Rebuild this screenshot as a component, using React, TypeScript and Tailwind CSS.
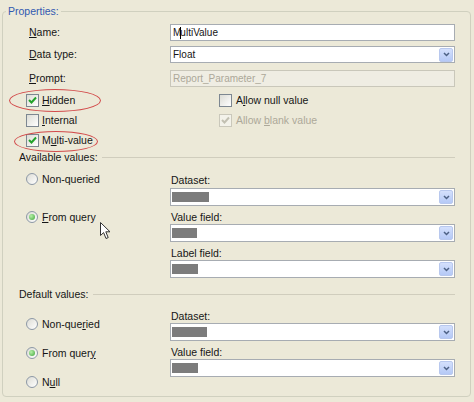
import type { ReactNode } from 'react'

function Check({ checked, disabled }: { checked?: boolean; disabled?: boolean }) {
  return (
    <span
      className={`inline-flex h-[13px] w-[13px] shrink-0 items-center justify-center border ${
        disabled ? 'border-[#cac8bb] bg-[#f3f2ea]' : 'border-[#7d8791] bg-gradient-to-br from-[#dcdcd5] to-white'
      }`}
    >
      {checked && (
        <svg width="9" height="8" viewBox="0 0 9 8">
          <path
            d="M1 4 L3.5 6.5 L8 1.5"
            fill="none"
            stroke={disabled ? '#c2c0b2' : '#22a22a'}
            strokeWidth="2"
          />
        </svg>
      )}
    </span>
  )
}

function Radio({ checked }: { checked?: boolean }) {
  return (
    <span className="inline-flex h-[12px] w-[12px] shrink-0 items-center justify-center rounded-full border border-[#8d98a6] bg-gradient-to-br from-[#dcdcd5] to-white">
      {checked && <span className="h-[6px] w-[6px] rounded-full bg-[radial-gradient(circle_at_35%_35%,#b6f0a8,#3ea53a)]" />}
    </span>
  )
}

function Arrow() {
  return (
    <span className="mr-px flex h-[14px] w-[14px] items-center justify-center rounded-[2px] border border-[#b8c8ee] bg-gradient-to-b from-[#d4e0fc] to-[#b5c9f6]">
      <svg width="7" height="5" viewBox="0 0 7 5">
        <path d="M1 1 L3.5 3.5 L6 1" fill="none" stroke="#4d6185" strokeWidth="1.5" />
      </svg>
    </span>
  )
}

function Select({ block, h = 'h-[18px]' }: { block?: string; h?: string }) {
  return (
    <div className={`flex ${h} w-[285px] items-center border border-[#a7acb2] bg-white pl-px`}>
      {block && <span className={`h-[10px] ${block} bg-[#7c7c7c]`} />}
      <span className="ml-auto">
        <Arrow />
      </span>
    </div>
  )
}

function Label({ children }: { children: ReactNode }) {
  return <div className="h-[13px] pl-px leading-[13px]">{children}</div>
}

function Heading({ title, gap }: { title: string; gap: string }) {
  return (
    <div className="flex h-[14px] items-center pl-[16px] pr-[15px]">
      <span>{title}</span>
      <span className={`${gap} h-px flex-1 bg-[#d0cdbd]`} />
    </div>
  )
}

function Opt({ children, checked, className }: { children: ReactNode; checked?: boolean; className: string }) {
  return (
    <div className={`flex h-[14px] items-center gap-[4px] ${className}`}>
      <Radio checked={checked} />
      <span>{children}</span>
    </div>
  )
}

export default function App() {
  return (
    <div className="relative h-[402px] w-[474px] overflow-hidden bg-[#ece9d8] font-['Liberation_Sans',Arial,sans-serif] text-[10.5px] leading-[13px] text-[#151515]">
      <fieldset className="ml-[2px] mt-[5px] h-[392px] w-[469px] rounded-[4px] border border-[#d0d0bf]">
        <legend className="ml-[3px] h-[13px] px-[2px] leading-[13px] text-[#3159b0]">Properties:</legend>

        {/* text fields */}
        <div className="pl-[26px]">
          <div className="mt-[6px] flex h-[17px] items-center">
            <span className="w-[141px]"><u>N</u>ame:</span>
            <div className="flex h-[17px] w-[285px] items-center border border-[#a7acb2] bg-white pl-[2px] text-[10px]">
              M<span className="-mx-px inline-block h-[12px] w-px bg-black" />ultiValue
            </div>
          </div>
          <div className="mt-[5px] flex h-[17px] items-center">
            <span className="w-[141px]"><u>D</u>ata type:</span>
            <div className="flex h-[17px] w-[285px] items-center border border-[#a7acb2] bg-white pl-[2px] text-[10px]">
              <span>Float</span>
              <span className="ml-auto">
                <Arrow />
              </span>
            </div>
          </div>
          <div className="mt-[7px] flex h-[17px] items-center">
            <span className="w-[141px]"><u>P</u>rompt:</span>
            <div className="flex h-[17px] w-[285px] items-center border border-[#c9c7ba] bg-[#efede3] pl-[2px] text-[10px] text-[#aca899]">
              Report_Parameter_7
            </div>
          </div>
        </div>

        {/* checkboxes */}
        <div className="mt-[3px] flex pl-[23px]">
          <div className="w-[193px]">
            <div className="flex h-[20px] items-center gap-[3px]">
              <Check checked />
              <span><u>H</u>idden</span>
            </div>
            <div className="flex h-[20px] items-center gap-[3px]">
              <Check />
              <span><u>I</u>nternal</span>
            </div>
            <div className="flex h-[20px] items-center gap-[3px]">
              <Check checked />
              <span>M<u>u</u>lti-value</span>
            </div>
          </div>
          <div>
            <div className="flex h-[20px] items-center gap-[4px]">
              <Check />
              <span>A<u>l</u>low null value</span>
            </div>
            <div className="flex h-[20px] items-center gap-[4px] text-[#aca899]">
              <Check checked disabled />
              <span>Allow <u>b</u>lank value</span>
            </div>
          </div>
        </div>

        {/* available values */}
        <Heading title="Available values:" gap="ml-[4px]" />
        <div className="flex pl-[23px]">
          <div className="w-[144px]">
            <Opt className="mt-[8px]">Non-queried</Opt>
            <Opt className="mt-[24px]" checked>
              <u>F</u>rom query
            </Opt>
          </div>
          <div className="w-[285px]">
            <div className="mt-[10px]">
              <Label>Dataset:</Label>
            </div>
            <div className="mt-px">
              <Select block="w-[37px]" />
            </div>
            <div className="mt-[5px]">
              <Label>Value field:</Label>
            </div>
            <Select block="w-[25px]" />
            <div className="mt-[5px]">
              <Label>Label field:</Label>
            </div>
            <Select block="w-[26px]" />
          </div>
        </div>

        {/* default values */}
        <div className="mt-[9px]">
          <Heading title="Default values:" gap="ml-[5px]" />
        </div>
        <div className="flex pl-[23px]">
          <div className="w-[144px]">
            <Opt className="mt-[16px]">
              Non-que<u>r</u>ied
            </Opt>
            <Opt className="mt-[15px]" checked>
              From quer<u>y</u>
            </Opt>
            <Opt className="mt-[15px]">
              N<u>u</u>ll
            </Opt>
          </div>
          <div className="w-[285px]">
            <div className="mt-[9px]">
              <Label>Dataset:</Label>
            </div>
            <Select block="w-[35px]" />
            <div className="mt-[5px]">
              <Label>Value field:</Label>
            </div>
            <Select block="w-[26px]" />
          </div>
        </div>
      </fieldset>

      {/* annotation ellipses */}
      <div className="absolute left-[9px] top-[89px] h-[23px] w-[92px] rounded-[50%] border border-[#d24a4a]" />
      <div className="absolute left-[14px] top-[131px] h-[21px] w-[84px] rounded-[50%] border border-[#d24a4a]" />

      {/* mouse pointer */}
      <svg className="absolute left-[100px] top-[222px]" width="11" height="18" viewBox="0 0 11 18">
        <path
          d="M0.5 0.5 L0.5 13.5 L3.6 10.6 L6 16.5 L8.2 15.6 L5.8 9.8 L10 9.8 Z"
          fill="white"
          stroke="#333"
          strokeWidth="1"
          strokeLinejoin="round"
        />
      </svg>
    </div>
  )
}
